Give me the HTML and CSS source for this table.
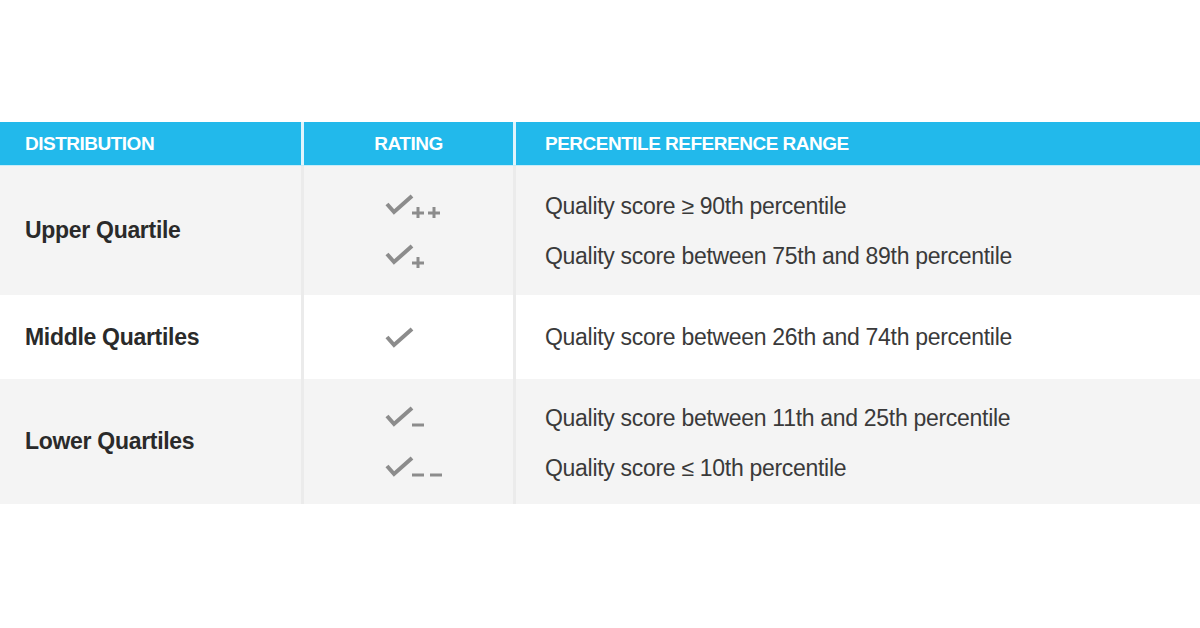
FILE: index.html
```html
<!DOCTYPE html>
<html>
<head>
<meta charset="utf-8">
<link rel="stylesheet" href="styles.css">
</head>
<body>
<div class="page">
  <div class="table">
    <div class="row head">
      <div class="cell c1">DISTRIBUTION</div>
      <div class="cell c2 center">RATING</div>
      <div class="cell c3">PERCENTILE REFERENCE RANGE</div>
    </div>
    <div class="row body gray r1">
      <div class="cell c1 label">Upper Quartile</div>
      <div class="cell c2 icons">
        <div class="line">
          <svg class="ic" width="60" height="24" viewBox="0 0 60 24"><polyline points="3,10 10,18 28,2"/><path d="M28 19h12M34 13v12M44 19h12M50 13v12"/></svg>
        </div>
        <div class="line">
          <svg class="ic" width="60" height="24" viewBox="0 0 60 24"><polyline points="3,10 10,18 28,2"/><path d="M28 19h12M34 13v12"/></svg>
        </div>
      </div>
      <div class="cell c3 texts">
        <div class="line">Quality score ≥ 90th percentile</div>
        <div class="line">Quality score between 75th and 89th percentile</div>
      </div>
    </div>
    <div class="row body white r2">
      <div class="cell c1 label">Middle Quartiles</div>
      <div class="cell c2 icons">
        <div class="line">
          <svg class="ic" width="60" height="24" viewBox="0 0 60 24"><polyline points="3,12 10,20 28,4"/></svg>
        </div>
      </div>
      <div class="cell c3 texts">
        <div class="line">Quality score between 26th and 74th percentile</div>
      </div>
    </div>
    <div class="row body gray r3">
      <div class="cell c1 label">Lower Quartiles</div>
      <div class="cell c2 icons">
        <div class="line">
          <svg class="ic" width="60" height="24" viewBox="0 0 60 24"><polyline points="3,10 10,18 28,2"/><path d="M28 19h12"/></svg>
        </div>
        <div class="line">
          <svg class="ic" width="60" height="24" viewBox="0 0 60 24"><polyline points="3,10 10,18 28,2"/><path d="M28 19h12M46 19h12"/></svg>
        </div>
      </div>
      <div class="cell c3 texts">
        <div class="line">Quality score between 11th and 25th percentile</div>
        <div class="line">Quality score ≤ 10th percentile</div>
      </div>
    </div>
  </div>
</div>
</body>
</html>
```
FILE: styles.css
```css
html, body {
  margin: 0;
  padding: 0;
  background: #ffffff;
}
.page {
  width: 1200px;
  height: 628px;
  padding-top: 122px;
  box-sizing: border-box;
  font-family: "Liberation Sans", Arial, sans-serif;
}
.table {
  display: flex;
  flex-direction: column;
}
.row {
  display: grid;
  grid-template-columns: 301px 212px 1fr;
}
.head {
  background: #22b9eb;
  height: 43px;
  border-bottom: 1px solid #c8ecf8;
  color: #ffffff;
  font-weight: bold;
  font-size: 19px;
  letter-spacing: -0.5px;
}
.head .cell {
  display: flex;
  align-items: center;
}
.head .c2, .head .c3 {
  border-left: 3px solid #dff4fc;
}
.head .c1 { padding-left: 25px; }
.head .c2 { justify-content: center; }
.head .c3 { padding-left: 29px; }
.gray { background: #f4f4f4; }
.white { background: #ffffff; }
.body .c2, .body .c3 {
  border-left: 3px solid #ebebeb;
}
.r1 { height: 129px; }
.r2 { height: 84px; }
.r3 { height: 125px; }
.r1 .icons, .r1 .texts { padding-top: 15px; }
.r3 .icons, .r3 .texts { padding-top: 14px; }
.r2 .icons, .r2 .texts { padding-top: 17px; }
.label {
  display: flex;
  align-items: center;
  padding-left: 25px;
  font-weight: bold;
  font-size: 23px;
  letter-spacing: -0.3px;
  color: #2a2a2a;
}
.r1 .label { padding-bottom: 1px; }
.icons {
  padding-left: 80px;
  box-sizing: border-box;
}
.texts {
  padding-left: 29px;
  font-size: 23px;
  letter-spacing: -0.3px;
  color: #3a3a3a;
}
.line {
  height: 50px;
  display: flex;
  align-items: center;
}
.ic {
  fill: none;
  stroke: #8c8c8c;
  stroke-width: 4;
}
.ic path { stroke-width: 3; }
```
